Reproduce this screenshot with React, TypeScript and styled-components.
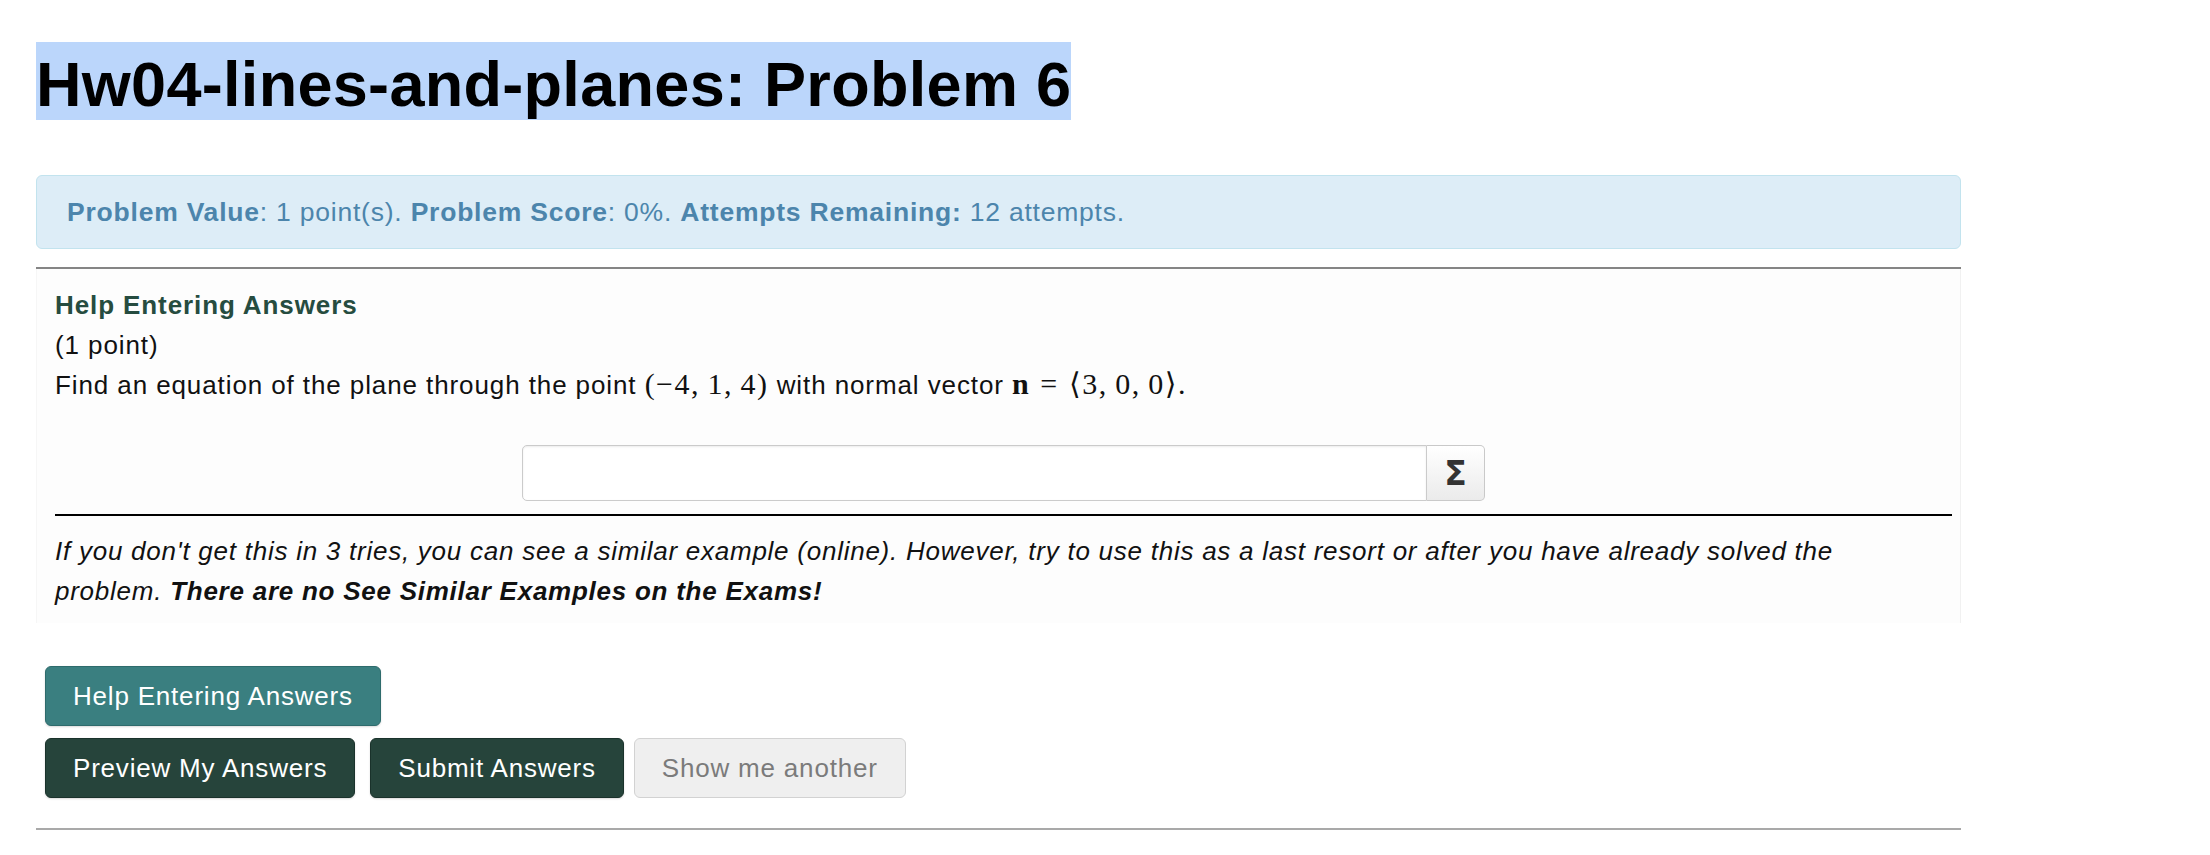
import styled, { createGlobalStyle } from "styled-components";

const GlobalStyle = createGlobalStyle`
  body {
    margin: 0;
    background: #fff;
    font-family: "Liberation Sans", Arial, sans-serif;
    color: #111;
  }
`;

const Page = styled.div`
  width: 1925px;
  margin-left: 36px;
  padding-top: 42px;
`;

const Title = styled.h1`
  margin: 0;
  height: 78px;
  color: #000;
  font-size: 63px;
  font-weight: 700;
  letter-spacing: 0.3px;
  line-height: 72px;
`;

const Highlight = styled.span`
  display: inline-block;
  height: 72px;
  padding: 6px 0 0;
  background: #bbd6fb;
`;

const Alert = styled.div`
  margin-top: 55px;
  padding: 17px 24px 17px 30px;
  border: 1px solid #c2e3ee;
  border-radius: 6px;
  background: #ddedf7;
  color: #4c85ac;
  font-size: 26.5px;
  letter-spacing: 0.78px;
  line-height: 38px;

  b {
    font-weight: 700;
  }
`;

const Panel = styled.section`
  margin-top: 18px;
  border-top: 2px solid #858585;
`;

const PanelBody = styled.div`
  padding: 16px 8px 12px 18px;
  background: #fdfdfd;
  border-right: 1px solid #f1f1f1;
  border-left: 1px solid #f6f6f6;
  font-size: 26px;
  letter-spacing: 0.9px;
  line-height: 40px;
`;

const HelpHeading = styled.div`
  color: #264c40;
  font-weight: 700;
`;

const Math = styled.span<{ $bold?: boolean }>`
  font-family: "Liberation Serif", "DejaVu Serif", serif;
  font-size: 30px;
  font-weight: ${(p) => (p.$bold ? 700 : 400)};
  letter-spacing: 1.5px;
  line-height: 1;
`;

const Equals = styled.span`
  font-family: "Liberation Serif", "DejaVu Serif", serif;
  font-size: 30px;
  line-height: 1;
  margin: 0 11px 0 10px;
`;

const AnswerRow = styled.div`
  display: flex;
  justify-content: center;
  margin-top: 40px;
`;

const AnswerInput = styled.input`
  box-sizing: border-box;
  width: 905px;
  height: 56px;
  margin: 0;
  border: 1px solid #cbcbcb;
  border-radius: 5px 0 0 5px;
  box-shadow: inset 0 1px 2px rgba(0, 0, 0, 0.08);
  background: #fff;
  font-size: 24px;
  outline: none;
`;

const SigmaButton = styled.button`
  box-sizing: border-box;
  width: 58px;
  height: 56px;
  margin: 0;
  padding: 0;
  border: 1px solid #c9c9c9;
  border-left: none;
  border-radius: 0 5px 5px 0;
  background: linear-gradient(#ffffff, #ebebeb);
  color: #333;
  font-family: "DejaVu Sans", "Liberation Sans", sans-serif;
  font-size: 33px;
  font-weight: 700;
  line-height: 1;
`;

const Rule = styled.hr<{ $color?: string }>`
  margin: 0;
  border: none;
  height: 2px;
  background: ${(p) => p.$color ?? "#000"};
`;

const Note = styled.p`
  margin: 15px 0 0;
  font-style: italic;
  letter-spacing: 0.75px;

  b {
    font-weight: 700;
  }
`;

const Actions = styled.div`
  display: flex;
  flex-direction: column;
  gap: 12px;
  margin: 43px 0 0 9px;
`;

const ButtonRow = styled.div`
  display: flex;
  gap: 10px;
`;

type Variant = "help" | "primary" | "disabled";

const colors: Record<Variant, { bg: string; border: string; fg: string }> = {
  help: { bg: "#3a7f80", border: "#2e6b6c", fg: "#fff" },
  primary: { bg: "#26443b", border: "#1a322b", fg: "#fff" },
  disabled: { bg: "#efefef", border: "#d2d2d2", fg: "#7b7b7b" },
};

const Button = styled.button<{ $variant: Variant; $extra?: number }>`
  box-sizing: border-box;
  height: 60px;
  margin: 0 ${(p) => p.$extra ?? 0}px 0 0;
  padding: 0 27px;
  border: 1px solid ${(p) => colors[p.$variant].border};
  border-radius: 6px;
  background: ${(p) => colors[p.$variant].bg};
  color: ${(p) => colors[p.$variant].fg};
  font-family: "Liberation Sans", Arial, sans-serif;
  font-size: 26px;
  letter-spacing: 0.8px;
  line-height: 36px;
  box-shadow: ${(p) =>
    p.$variant === "disabled" ? "none" : "0 1px 2px rgba(0, 0, 0, 0.15)"};
`;

export default function App() {
  return (
    <>
      <GlobalStyle />
      <Page>
        <Title>
          <Highlight>Hw04-lines-and-planes: Problem 6</Highlight>
        </Title>

        <Alert>
          <b>Problem Value</b>: 1 point(s). <b>Problem Score</b>: 0%.{" "}
          <b>Attempts Remaining:</b> 12 attempts.
        </Alert>

        <Panel>
          <PanelBody>
            <HelpHeading>Help Entering Answers</HelpHeading>
            <div>(1 point)</div>
            <div>
              Find an equation of the plane through the point{" "}
              <Math>(−4,&thinsp;1,&thinsp;4)</Math> with normal vector{" "}
              <Math $bold>n</Math>
              <Equals>=</Equals>
              <Math>⟨3,&thinsp;0,&thinsp;0⟩.</Math>
            </div>

            <AnswerRow>
              <AnswerInput type="text" aria-label="answer" />
              <SigmaButton type="button">Σ</SigmaButton>
            </AnswerRow>

            <Rule style={{ marginTop: 13 }} />

            <Note>
              If you don't get this in 3 tries, you can see a similar example
              (online). However, try to use this as a last resort or after you
              have already solved the
              <br />
              problem. <b>There are no See Similar Examples on the Exams!</b>
            </Note>
          </PanelBody>
        </Panel>

        <Actions>
          <ButtonRow>
            <Button $variant="help">Help Entering Answers</Button>
          </ButtonRow>
          <ButtonRow>
            <Button $variant="primary" $extra={5}>
              Preview My Answers
            </Button>
            <Button $variant="primary">Submit Answers</Button>
            <Button $variant="disabled">Show me another</Button>
          </ButtonRow>
        </Actions>

        <Rule $color="#a9a9a9" style={{ marginTop: 30 }} />
      </Page>
    </>
  );
}
